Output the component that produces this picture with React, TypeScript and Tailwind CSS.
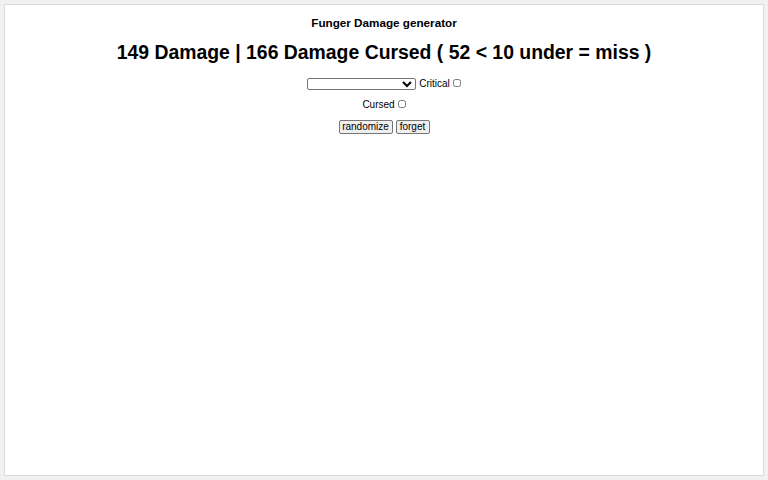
import { useState } from "react";

const font = { fontFamily: '"Liberation Sans", Arial, sans-serif' };

export default function App() {
  const [critical, setCritical] = useState(false);
  const [cursed, setCursed] = useState(false);

  return (
    <div className="h-[480px] w-full bg-[#f1f1f1] p-[4px] flex" style={font}>
      <div className="flex-1 bg-white border border-[#dcdcdc] flex flex-col items-center text-black">
        <h3 className="mt-[10px] text-[11.7px] font-bold leading-[16px]">Funger Damage generator</h3>
        <h1 className="mt-[9px] text-[19.4px] font-bold leading-[24px]">
          149 Damage | 166 Damage Cursed ( 52 &lt; 10 under = miss )
        </h1>
        <div className="mt-[14px] flex items-center gap-[2px] text-[10px] leading-[12px]">
          <select className="w-[109px] h-[12px] border border-[#767676] rounded-[2px] bg-white text-[9px] appearance-auto p-0" />
          <span className="ml-[1px]">Critical</span>
          <input
            type="checkbox"
            checked={critical}
            onChange={() => setCritical(!critical)}
            className="w-[8px] h-[8px] m-0 ml-[1px] mb-[3px]"
          />
        </div>
        <div className="mt-[9px] flex items-center gap-[2px] text-[10px] leading-[12px]">
          <span>Cursed</span>
          <input
            type="checkbox"
            checked={cursed}
            onChange={() => setCursed(!cursed)}
            className="w-[8px] h-[8px] m-0 ml-[1px] mb-[3px]"
          />
        </div>
        <div className="mt-[9px] flex gap-[3px] text-[10px]">
          <button className="h-[14px] w-[54px] leading-[12px] border border-[#767676] rounded-[2px] bg-[#efefef]">
            randomize
          </button>
          <button className="h-[14px] w-[34px] leading-[12px] border border-[#767676] rounded-[2px] bg-[#efefef]">
            forget
          </button>
        </div>
      </div>
    </div>
  );
}
